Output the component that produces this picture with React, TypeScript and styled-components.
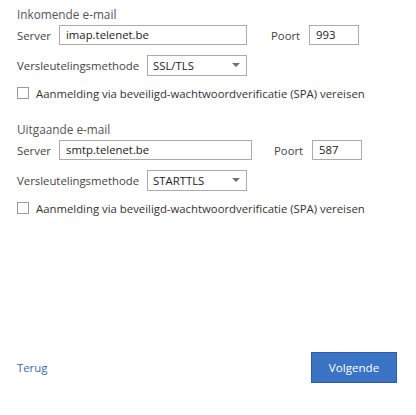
import styled, { createGlobalStyle } from "styled-components";

const GlobalStyle = createGlobalStyle`
  html, body {
    margin: 0;
    padding: 0;
    background: #ffffff;
  }
  body {
    font-family: "Open Sans", "Noto Sans", sans-serif;
    font-size: 11.35px;
    color: #444444;
  }
`;

const Page = styled.div`
  display: flex;
  flex-direction: column;
  width: 416px;
  height: 415px;
  box-sizing: border-box;
`;

const Section = styled.section`
  display: flex;
  flex-direction: column;
  height: 115px;
  padding: 6px 0 0 17px;
  box-sizing: border-box;
`;

const Heading = styled.div`
  height: 16px;
  line-height: 16px;
  font-size: 11.8px;
  color: #555555;
  margin-bottom: 3px;
`;

const Row = styled.div<{ $gap?: number }>`
  display: flex;
  align-items: center;
  height: 20px;
  margin-bottom: ${(p) => p.$gap ?? 10}px;
`;

const Label = styled.span<{ $width: number; $left?: number }>`
  width: ${(p) => p.$width}px;
  margin-left: ${(p) => p.$left ?? 0}px;
  color: #444444;
  white-space: nowrap;
`;

const TextBox = styled.div<{ $width: number }>`
  width: ${(p) => p.$width}px;
  height: 20px;
  box-sizing: border-box;
  border: 1px solid #ababab;
  padding: 0 6px;
  line-height: 18px;
  color: #222222;
  background: #ffffff;
`;

const Select = styled.div`
  display: flex;
  align-items: center;
  justify-content: space-between;
  width: 100px;
  height: 21px;
  box-sizing: border-box;
  border: 1px solid #ababab;
  padding: 0 6px 0 5px;
  color: #222222;
`;

const Arrow = styled.span`
  width: 0;
  height: 0;
  border-left: 4px solid transparent;
  border-right: 4px solid transparent;
  border-top: 4px solid #707070;
`;

const CheckRow = styled.label`
  display: flex;
  align-items: center;
  height: 14px;
  color: #333333;
  gap: 7px;
`;

const Box = styled.span`
  width: 12px;
  height: 12px;
  box-sizing: border-box;
  border: 1px solid #9a9a9a;
  background: #ffffff;
`;

const Footer = styled.div`
  display: flex;
  align-items: center;
  justify-content: space-between;
  margin-top: auto;
  padding: 0 19px 32px 17px;
`;

const Link = styled.a`
  color: #3a68ad;
  text-decoration: none;
`;

const Button = styled.button`
  width: 86px;
  height: 31px;
  border: 1px solid #2a5ea6;
  background: #3b74c5;
  color: #ffffff;
  font-family: inherit;
  font-size: 11.6px;
`;

interface IMailSection {
  title: string;
  server: string;
  port: string;
  method: string;
  serverWidth: number;
  portLeft: number;
}

const sections: IMailSection[] = [
  { title: "Inkomende e-mail", server: "imap.telenet.be", port: "993", method: "SSL/TLS", serverWidth: 188, portLeft: 24 },
  { title: "Uitgaande e-mail", server: "smtp.telenet.be", port: "587", method: "STARTTLS", serverWidth: 193, portLeft: 22 },
];

function MailSection({ s }: { s: IMailSection }) {
  return (
    <Section>
      <Heading>{s.title}</Heading>
      <Row>
        <Label $width={42}>Server</Label>
        <TextBox $width={s.serverWidth}>{s.server}</TextBox>
        <Label $width={38} $left={s.portLeft}>Poort</Label>
        <TextBox $width={50}>{s.port}</TextBox>
      </Row>
      <Row $gap={11}>
        <Label $width={130}>Versleutelingsmethode</Label>
        <Select>
          <span>{s.method}</span>
          <Arrow />
        </Select>
      </Row>
      <CheckRow>
        <Box />
        <span>Aanmelding via beveiligd-wachtwoordverificatie (SPA) vereisen</span>
      </CheckRow>
    </Section>
  );
}

export default function App() {
  return (
    <>
      <GlobalStyle />
      <Page>
        {sections.map((s) => (
          <MailSection key={s.title} s={s} />
        ))}
        <Footer>
          <Link href="#">Terug</Link>
          <Button>Volgende</Button>
        </Footer>
      </Page>
    </>
  );
}
